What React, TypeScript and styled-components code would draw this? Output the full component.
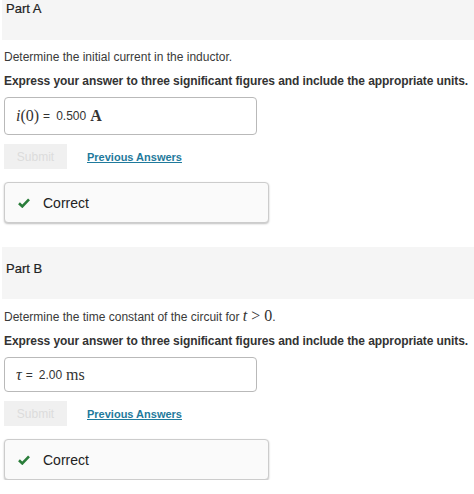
import styled, { createGlobalStyle } from "styled-components";

const GlobalStyle = createGlobalStyle`
    body {
        margin: 0;
        background: #ffffff;
        font-family: "Liberation Sans", Arial, sans-serif;
        color: #333333;
    }
`;

type PartProps = {
    title: string;
    prompt: React.ReactNode;
    answer: React.ReactNode;
    cropped?: boolean;
    inputHeight: number;
};

function Part({ title, prompt, answer, cropped, inputHeight }: PartProps) {
    return (
        <Section>
            <Header $cropped={cropped}>{title}</Header>
            <Prompt>{prompt}</Prompt>
            <Instructions>
                Express your answer to three significant figures and include the appropriate units.
            </Instructions>
            <AnswerBox $height={inputHeight}>{answer}</AnswerBox>
            <Actions>
                <SubmitButton disabled>Submit</SubmitButton>
                <PrevLink href="#">Previous Answers</PrevLink>
            </Actions>
            <Feedback>
                <CheckIcon viewBox="0 0 12 10">
                    <path d="M1 5.2 L4.3 8.4 L11 1.4" fill="none" stroke="#2a7d3a" strokeWidth="2.6" />
                </CheckIcon>
                <FeedbackText>Correct</FeedbackText>
            </Feedback>
        </Section>
    );
}

export default function App() {
    return (
        <Page>
            <GlobalStyle />
            <Part
                title="Part A"
                cropped
                inputHeight={38}
                prompt="Determine the initial current in the inductor."
                answer={
                    <>
                        <MathVar>i</MathVar>
                        <MathNum>(0)</MathNum>
                        <Equals>=</Equals>
                        <Value>0.500</Value>
                        <Unit $bold>A</Unit>
                    </>
                }
            />
            <Part
                title="Part B"
                inputHeight={35}
                prompt={
                    <>
                        Determine the time constant of the circuit for <InlineMath><i>t</i> &gt; 0</InlineMath>.
                    </>
                }
                answer={
                    <>
                        <MathVar>τ</MathVar>
                        <Equals>=</Equals>
                        <Value>2.00</Value>
                        <Unit>ms</Unit>
                    </>
                }
            />
        </Page>
    );
}

const Page = styled.div`
    display: flex;
    flex-direction: column;
    gap: 24px;
    padding-left: 2px;
    width: 472px;
`;

const Section = styled.section`
    display: flex;
    flex-direction: column;
`;

const Header = styled.div<{ $cropped?: boolean }>`
    height: ${(p) => (p.$cropped ? "40px" : "52px")};
    box-sizing: border-box;
    padding: ${(p) => (p.$cropped ? "1px" : "14px")} 4px 0;
    background: #f5f5f5;
    font-size: 13px;
    line-height: 16px;
    color: #222222;
    -webkit-text-stroke: 0.2px #222222;
`;

const Prompt = styled.p`
    margin: 9px 0 0 2px;
    font-size: 12px;
    line-height: 16px;
    color: #3a3a3a;
`;

const InlineMath = styled.span`
    font-family: "Liberation Serif", "Times New Roman", serif;
    font-size: 16px;
    color: #333333;
`;

const Instructions = styled.p`
    margin: 8px 0 0 2px;
    font-size: 12px;
    line-height: 16px;
    font-weight: bold;
    letter-spacing: -0.08px;
    white-space: nowrap;
    color: #333333;
`;

const AnswerBox = styled.div<{ $height: number }>`
    margin: 8px 0 0 2px;
    width: 253px;
    height: ${(p) => p.$height}px;
    box-sizing: border-box;
    border: 1px solid #b9b9b9;
    border-radius: 4px;
    display: flex;
    align-items: center;
    padding-left: 11px;
    color: #333333;
`;

const MathVar = styled.span`
    font-family: "Liberation Serif", "Times New Roman", serif;
    font-style: italic;
    font-size: 16px;
`;

const MathNum = styled.span`
    font-family: "Liberation Serif", "Times New Roman", serif;
    font-size: 16px;
`;

const Equals = styled.span`
    font-size: 12px;
    margin: 0 6px 0 4px;
`;

const Value = styled.span`
    font-size: 12px;
    margin-right: 4px;
`;

const Unit = styled.span<{ $bold?: boolean }>`
    font-family: "Liberation Serif", "Times New Roman", serif;
    font-size: 16px;
    font-weight: ${(p) => (p.$bold ? "bold" : "normal")};
`;

const Actions = styled.div`
    display: flex;
    align-items: center;
    gap: 20px;
    margin: 9px 0 0 2px;
`;

const SubmitButton = styled.button`
    width: 63px;
    height: 25px;
    border: none;
    border-radius: 0;
    background: #f0f0f0;
    color: #dcdcdc;
    font-family: "Liberation Sans", Arial, sans-serif;
    font-size: 12px;
    padding: 0;
`;

const PrevLink = styled.a`
    font-size: 11px;
    font-weight: bold;
    color: #1f7a9c;
    text-decoration: underline;
`;

const Feedback = styled.div`
    margin: 13px 0 0 2px;
    width: 265px;
    height: 41px;
    box-sizing: border-box;
    border: 1px solid #cccccc;
    border-radius: 4px;
    background: #fafafa;
    box-shadow: 0 1px 2px rgba(0, 0, 0, 0.25);
    display: flex;
    align-items: center;
    padding-left: 13px;
    gap: 13px;
`;

const CheckIcon = styled.svg`
    width: 12px;
    height: 10px;
`;

const FeedbackText = styled.span`
    font-size: 14px;
    color: #222222;
`;
